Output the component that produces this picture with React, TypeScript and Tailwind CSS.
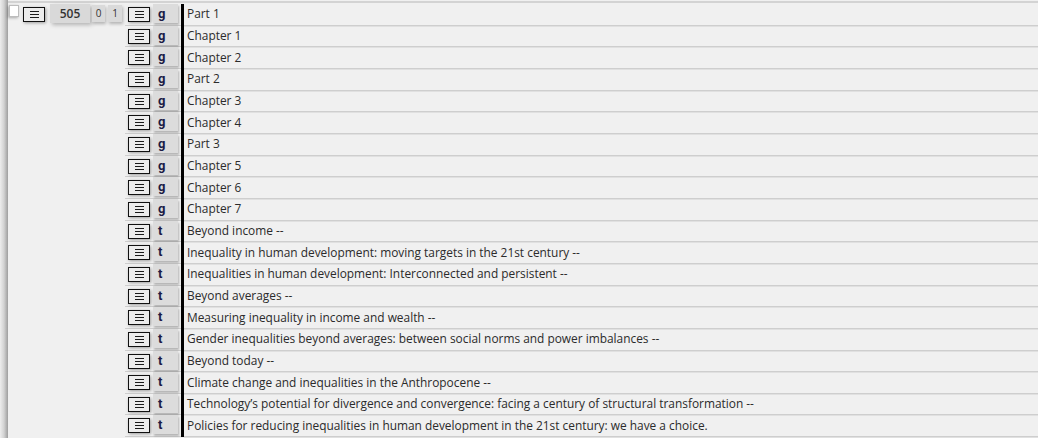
import React from "react";

const rows: [string, string][] = [
  ["g", "Part 1"],
  ["g", "Chapter 1"],
  ["g", "Chapter 2"],
  ["g", "Part 2"],
  ["g", "Chapter 3"],
  ["g", "Chapter 4"],
  ["g", "Part 3"],
  ["g", "Chapter 5"],
  ["g", "Chapter 6"],
  ["g", "Chapter 7"],
  ["t", "Beyond income --"],
  ["t", "Inequality in human development: moving targets in the 21st century --"],
  ["t", "Inequalities in human development: Interconnected and persistent --"],
  ["t", "Beyond averages --"],
  ["t", "Measuring inequality in income and wealth --"],
  ["t", "Gender inequalities beyond averages: between social norms and power imbalances --"],
  ["t", "Beyond today --"],
  ["t", "Climate change and inequalities in the Anthropocene --"],
  ["t", "Technology\u2019s potential for divergence and convergence: facing a century of structural transformation --"],
  ["t", "Policies for reducing inequalities in human development in the 21st century: we have a choice."],
];

function MenuBtn() {
  return (
    <div className="w-[22px] h-[15px] border-[1.5px] border-[#111] bg-[#ececec] flex items-center justify-center shadow-[1px_1px_3px_rgba(0,0,0,0.35)]">
      <svg width="9" height="7" viewBox="0 0 9 7">
        <path d="M0 0.5H9M0 3.5H9M0 6.5H9" stroke="#1a1a1a" strokeWidth="1" />
      </svg>
    </div>
  );
}

export default function App() {
  return (
    <div
      className="w-[1038px] h-[438px] bg-[#f0f0f0] overflow-hidden flex"
      style={{ fontFamily: '"Open Sans", "Noto Sans", sans-serif' }}
    >
      <div className="w-[8px] h-full shrink-0 bg-linear-to-r from-[#ededed] via-[#d2d2d2] to-[#9e9e9e]" />
      <div className="flex-1 pt-[1px]">
        <div className="border-t-2 border-[#d3d3d3] pt-[1px] flex">
          <div className="w-[117px] shrink-0 flex items-start">
            <div className="ml-[1px] mt-[1px] w-[10px] h-[12px] bg-white border border-[#bdbdbd] shadow-[-1px_1px_3px_rgba(0,0,0,0.3)]" />
            <div className="ml-[4px] mt-[3px]">
              <MenuBtn />
            </div>
            <div className="ml-[5px] w-[40px] h-[19px] bg-[#d9d9d9] flex items-center justify-center text-[12px] font-semibold text-[#333] shadow-[2px_2px_4px_rgba(0,0,0,0.25)]">
              505
            </div>
            <div className="ml-[2px] mt-[1px] w-[13px] h-[17px] bg-[#dadada] flex items-center justify-center text-[10px] text-[#333] shadow-[1px_2px_3px_rgba(0,0,0,0.25)]">
              0
            </div>
            <div className="ml-[3px] mt-[1px] w-[14px] h-[17px] bg-[#dadada] flex items-center justify-center text-[10px] text-[#333] shadow-[1px_2px_3px_rgba(0,0,0,0.25)]">
              1
            </div>
          </div>
          <div className="flex-1 flex flex-col">
            {rows.map(([k, label], i) => (
              <div key={i} className="h-[21.67px] flex items-stretch">
                <div className="w-[56px] shrink-0 flex items-start border-b border-[#cecece]">
                  <div className="ml-[3px] mt-[3px]">
                    <MenuBtn />
                  </div>
                  <div
                    className="ml-[3px] w-[25px] h-[19px] bg-[#dcdcdc] flex items-center pl-[5px] text-[13px] font-bold text-[#1b1b45] leading-none shadow-[1px_2px_2px_rgba(0,0,0,0.25)]"
                    style={{ fontFamily: "Roboto, Inter, sans-serif" }}
                  >
                    {k}
                  </div>
                </div>
                <div className="w-[3px] shrink-0 bg-black" />
                <div className="flex-1 pl-[3px] flex items-center border-b border-[#cecece] shadow-[0_1px_0_#e0e0e0] text-[11.9px] text-[#2b2b2b] whitespace-nowrap">
                  {label}
                </div>
              </div>
            ))}
          </div>
        </div>
      </div>
    </div>
  );
}
